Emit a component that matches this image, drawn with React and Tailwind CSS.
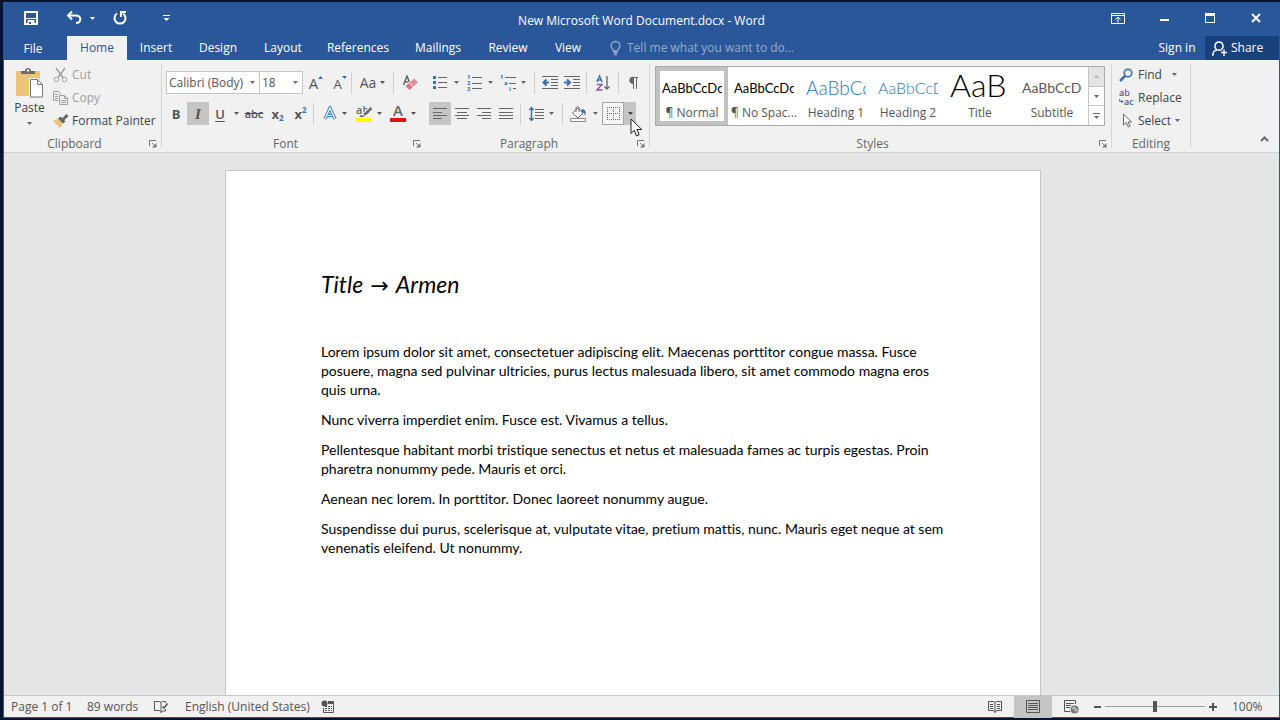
import { useState } from 'react';
import clsx from 'clsx';

const TABS = [
  { name: 'Home', width: 'w-[60px]' },
  { name: 'Insert', width: 'w-[58px]' },
  { name: 'Design', width: 'w-[66px]' },
  { name: 'Layout', width: 'w-[64px]' },
  { name: 'References', width: 'w-[86px]' },
  { name: 'Mailings', width: 'w-[74px]' },
  { name: 'Review', width: 'w-[66px]' },
  { name: 'View', width: 'w-[54px]' },
];

const STYLES = [
  { name: '¶ Normal', sample: 'AaBbCcDc', look: 'text-[13px] text-black' },
  { name: '¶ No Spac...', sample: 'AaBbCcDc', look: 'text-[13px] text-black' },
  { name: 'Heading 1', sample: 'AaBbCc', look: 'text-[19px] font-light text-[#2e74b5]' },
  { name: 'Heading 2', sample: 'AaBbCcD', look: 'text-[16px] font-light text-[#2e74b5]' },
  { name: 'Title', sample: 'AaB', look: 'pb-[6px] text-[32px] font-light text-black' },
  { name: 'Subtitle', sample: 'AaBbCcD', look: 'text-[14px] text-[#5a5a5a]' },
];

const PARAGRAPHS = [
  'Lorem ipsum dolor sit amet, consectetuer adipiscing elit. Maecenas porttitor congue massa. Fusce posuere, magna sed pulvinar ultricies, purus lectus malesuada libero, sit amet commodo magna eros quis urna.',
  'Nunc viverra imperdiet enim. Fusce est. Vivamus a tellus.',
  'Pellentesque habitant morbi tristique senectus et netus et malesuada fames ac turpis egestas. Proin pharetra nonummy pede. Mauris et orci.',
  'Aenean nec lorem. In porttitor. Donec laoreet nonummy augue.',
  'Suspendisse dui purus, scelerisque at, vulputate vitae, pretium mattis, nunc. Mauris eget neque at sem venenatis eleifend. Ut nonummy.',
];

function Arrow({ className }) {
  return (
    <svg width="5" height="3" viewBox="0 0 5 3" className={clsx('shrink-0', className)} fill="currentColor" aria-hidden="true">
      <path d="M0 0h5L2.5 3z" />
    </svg>
  );
}

function Icon({ w = 16, h = 16, children, className }) {
  return (
    <svg
      width={w}
      height={h}
      viewBox={`0 0 ${w} ${h}`}
      className={clsx('shrink-0 overflow-visible', className)}
      fill="none"
      stroke="currentColor"
      aria-hidden="true"
    >
      {children}
    </svg>
  );
}

function Tool({ label, className, children, ...rest }) {
  return (
    <button
      type="button"
      aria-label={label}
      className={clsx('flex h-[23px] shrink-0 items-center justify-center', className)}
      {...rest}
    >
      {children}
    </button>
  );
}

function Divider() {
  return <span className="h-[22px] w-px shrink-0 bg-[#d0d0d0]" />;
}

function Launcher({ label }) {
  return (
    <button type="button" aria-label={label} className="flex h-[17px] w-4 items-center justify-center text-[#777]">
      <Icon w={8} h={8}>
        <path d="M.5 6V.5H7M3 3l3 3" />
        <path d="M7.5 3v4.5H3z" fill="currentColor" stroke="none" />
      </Icon>
    </button>
  );
}

function Group({ title, width, launcher, children }) {
  return (
    <section aria-label={title} className={clsx('flex shrink-0', width)}>
      <div className="flex flex-1 flex-col justify-between">
        <div>{children}</div>
        <div className="flex h-[17px] items-center text-[#666]">
          <span className="flex-1 text-center">{title}</span>
          {launcher && <Launcher label={`${title} settings`} />}
        </div>
      </div>
      <span className="my-1 w-px bg-[#d4d4d4]" />
    </section>
  );
}

/* title bar */

function TitleBar() {
  return (
    <header className="flex h-[34px] items-center bg-[#2a579a] pb-[2px] text-white">
      <div className="flex flex-1 items-center">
        <Tool label="Save" className="ml-[15px] w-6">
          <Icon w={14} h={14}>
            <path d="M1 1h12v12H1z" strokeWidth="2" />
            <path d="M2 7.5h10" />
            <path d="M3.5 9h7v5h-7z" fill="currentColor" stroke="none" />
            <path d="M5 11h2v2H5z" fill="#2a579a" stroke="none" />
          </Icon>
        </Tool>
        <Tool label="Undo" className="ml-[19px] w-6">
          <Icon w={16} h={14}>
            <path d="M1.5 4.5H10c6 0 5.5 7.5 0 7.5M6 .5l-4 4 4 4" strokeWidth="2" />
          </Icon>
        </Tool>
        <Tool label="Undo list" className="w-3">
          <Arrow />
        </Tool>
        <Tool label="Repeat" className="ml-[10px] w-6">
          <Icon w={14} h={14}>
            <path d="M4 2.500a5.500 5.500 0 1 0 6 0" strokeWidth="2" />
            <path d="M8 6V1h5" strokeWidth="2" />
          </Icon>
        </Tool>
        <Tool label="Customize toolbar" className="ml-6 w-5">
          <Icon w={7} h={6}>
            <path d="M0 .5h7" />
            <path d="M.5 3h6l-3 3z" fill="currentColor" stroke="none" />
          </Icon>
        </Tool>
      </div>
      <h1 className="pt-[5px]">New Microsoft Word Document.docx - Word</h1>
      <div className="flex flex-1 justify-end">
        <Tool label="Ribbon display options" className="w-[46px]">
          <Icon w={14} h={11}>
            <path d="M.5.5h13v10H.5zM.5 2.5h13M7 9.5V5M4.5 6.500L7 4l2.500 2.500" />
          </Icon>
        </Tool>
        <Tool label="Minimize" className="w-[46px]">
          <span className="mt-1 h-[2px] w-[9px] bg-white" />
        </Tool>
        <Tool label="Maximize" className="w-[46px]">
          <span className="h-[10px] w-[10px] border border-t-[3px] border-white" />
        </Tool>
        <Tool label="Close" className="w-[46px]">
          <Icon w={10} h={10}>
            <path d="M1 1l8 8M9 1L1 9" strokeWidth="2" />
          </Icon>
        </Tool>
      </div>
    </header>
  );
}

function TabBar({ active, onSelect }) {
  return (
    <nav className="flex h-6 bg-[#2a579a] text-white">
      <button type="button" className="mr-[5px] w-[58px] pt-px">
        File
      </button>
      {TABS.map((tab) => (
        <button
          key={tab.name}
          type="button"
          onClick={() => onSelect(tab.name)}
          className={clsx(tab.width, tab.name === active && 'bg-[#f1f1f1] text-[#2a579a]')}
        >
          {tab.name}
        </button>
      ))}
      <label className="ml-[15px] flex flex-1 items-center gap-[6px] text-[#94abcd]">
        <Icon w={11} h={14}>
          <path d="M3.5 10C3.5 8 1 7.5 1 5a4.500 4.500 0 0 1 9 0c0 2.500-2.500 3-2.500 5zM3.500 11.500h4M4 13.500h3" strokeWidth="1.3" />
        </Icon>
        <input
          aria-label="Tell me what you want to do"
          placeholder="Tell me what you want to do..."
          className="w-[200px] bg-transparent outline-none placeholder:text-[#94abcd]"
        />
      </label>
      <button type="button" className="w-[56px]">
        Sign in
      </button>
      <button type="button" className="flex w-[74px] items-center gap-1 bg-[#18407a] pl-[7px]">
        <Icon w={15} h={15}>
          <path d="M.8 15c0-4 2-6 4.500-6M4.500 8.500C1.500 6 3 1 7 1s5.500 5 2.500 7.500c-1 .8-3 .8-4 .2M12 8.500v6.500M9 11.500h6" strokeWidth="1.400" />
        </Icon>
        Share
      </button>
    </nav>
  );
}

/* ribbon groups */

function ClipboardGroup() {
  return (
    <Group title="Clipboard" width="w-[158px]" launcher>
      <div className="flex pt-[3px]">
        <button type="button" className="flex w-[49px] flex-col items-center pt-1 pl-[2px]">
          <svg width="29" height="31" viewBox="0 0 29 31" aria-hidden="true">
            <path d="M1 4h24v25H1z" fill="#eac47b" />
            <path d="M6 7V4h4a3 3 0 0 1 6 0h4v3z" fill="#6b6b6b" />
            <circle cx="13" cy="3.500" r="1.200" fill="#f1f1f1" />
            <path d="M14 11h9l6 6v14H14z" fill="#f1f1f1" />
            <path d="M15.500 12.500h7l5 5v12.500h-12z" fill="#fff" stroke="#777" />
            <path d="M22.500 12.500v5h5" fill="none" stroke="#777" />
          </svg>
          <span className="mt-[2px] leading-4">Paste</span>
          <Arrow className="mt-[6px] text-[#666]" />
        </button>
        <div>
          <button type="button" className="flex h-[23px] items-center gap-1 text-[#a0a0a0]">
            <Icon w={15} h={16}>
              <path d="M3 1l7 9.500M12 1L5 10.500" strokeWidth="1.500" />
              <circle cx="3.500" cy="12.500" r="2.300" />
              <circle cx="11.500" cy="12.500" r="2.300" />
            </Icon>
            Cut
          </button>
          <button type="button" className="flex h-[23px] items-center gap-1 text-[#a0a0a0]">
            <Icon w={15} h={14}>
              <path d="M5.500 9.500h-5V.5h5l2 2v1M2 3.500h3M2 5.500h3M2 7.500h3" />
              <path d="M6.500 4.500h5l3 3v6h-8zM11.500 4.500v3h3M8 9.500h5M8 11.500h5" />
            </Icon>
            Copy
          </button>
          <button type="button" className="flex h-[23px] items-center gap-1">
            <Icon w={16} h={14} className="-mr-px">
              <path d="M0 7l5-2.500 5 5L7 14z" fill="#eac47b" stroke="none" />
              <path d="M5 4.500l2.500-2 5 5-2.500 2z" fill="#666" stroke="none" />
              <path d="M10 5.500L14.500 1" stroke="#666" strokeWidth="3" />
            </Icon>
            Format Painter
          </button>
        </div>
      </div>
    </Group>
  );
}

function Combo({ label, width, options }) {
  return (
    <label className={clsx('relative flex h-[23px] shrink-0 items-center border border-[#c6c6c6] bg-white', width)}>
      <select aria-label={label} className="h-[21px] w-full appearance-none bg-transparent pl-[2px] leading-5 text-[#555] outline-none">
        {options.map((option) => (
          <option key={option}>{option}</option>
        ))}
      </select>
      <Arrow className="pointer-events-none absolute right-1 text-[#666]" />
    </label>
  );
}

function FontGroup() {
  const [italic, setItalic] = useState(true);

  return (
    <Group title="Font" width="w-[263px]" launcher>
      <div className="flex flex-col gap-2 pt-[11px] pl-1 text-[#555]">
        <div className="flex items-center">
          <Combo label="Font" width="w-[94px]" options={['Calibri (Body)', 'Calibri Light']} />
          <Combo label="Font size" width="w-[44px] -ml-px" options={['18', '11', '12', '14']} />
          <Tool label="Increase font size" className="w-[26px]">
            <span className="text-[15px]">A</span>
            <svg width="5" height="3" viewBox="0 0 5 3" className="mb-[10px]" aria-hidden="true">
              <path d="M0 3h5L2.500 0z" fill="#3b6fa8" />
            </svg>
          </Tool>
          <Tool label="Decrease font size" className="w-[22px]">
            <span className="pt-[2px] text-[13px]">A</span>
            <Arrow className="mb-[10px] text-[#3b6fa8]" />
          </Tool>
          <Divider />
          <Tool label="Change case" className="w-[41px] gap-1">
            <span className="text-[14px]">Aa</span>
            <Arrow />
          </Tool>
          <Divider />
          <Tool label="Clear formatting" className="w-[31px]">
            <svg width="16" height="16" viewBox="0 0 16 16" aria-hidden="true">
              <path d="M1.500 10L5 1l3.500 9M3 7h4.500" fill="none" stroke="#666" strokeWidth="1.500" />
              <path d="M2.500 10.500L7 6.500l5.500 5L8 15.500z" fill="#f1f1f1" />
              <path d="M3.500 11l3.500-3 4 4-3.500 3z" fill="#d9788f" />
              <path d="M7.500 7.500L12.500 3.500l3.500 4-4.500 4z" fill="#e68a9c" />
            </svg>
          </Tool>
        </div>
        <div className="flex items-center">
          <Tool label="Bold" className="-ml-px w-[22px] text-[13px] font-bold">
            B
          </Tool>
          <Tool
            label="Italic"
            aria-pressed={italic}
            onClick={() => setItalic(!italic)}
            className={clsx('w-[22px] font-["Liberation_Serif",serif] text-[15px] font-bold italic', italic && 'bg-[#c5c5c5]')}
          >
            I
          </Tool>
          <Tool label="Underline" className="w-[22px] text-[13px] font-semibold underline underline-offset-2">
            U
          </Tool>
          <Tool label="Underline style" className="w-[11px]">
            <Arrow />
          </Tool>
          <Tool label="Strikethrough" className="w-6 text-[11px] font-semibold line-through">
            abc
          </Tool>
          <Tool label="Subscript" className="w-[23px] text-[13px] font-bold">
            x<span className="pt-2 text-[8px] text-[#3b6fa8]">2</span>
          </Tool>
          <Tool label="Superscript" className="w-[23px] text-[13px] font-bold">
            x<span className="pb-2 text-[8px] text-[#3b6fa8]">2</span>
          </Tool>
          <span className="w-px" />
          <Divider />
          <Tool label="Text effects" className="w-[37px] gap-[5px] pl-1">
            <svg width="14" height="15" viewBox="0 0 14 15" aria-hidden="true">
              <path d="M2 13L7 2l5 11M4.500 9.500h5" fill="none" stroke="#b9d3ee" strokeWidth="4" />
              <path d="M2 13L7 2l5 11M4.500 9.500h5" fill="none" stroke="#3f7dbd" strokeWidth="3" />
              <path d="M2 13L7 2l5 11M4.500 9.500h5" fill="none" stroke="#fff" strokeWidth="1.200" />
            </svg>
            <Arrow />
          </Tool>
          <Tool label="Highlight colour" className="w-[35px] gap-[5px]">
            <svg width="16" height="17" viewBox="0 0 16 17" className="overflow-visible" aria-hidden="true">
              <text x="0" y="9" fontSize="11" fontWeight="600" fill="#666">ab</text>
              <path d="M15 2L9 8l-4 4" stroke="#f1f1f1" strokeWidth="3" fill="none" />
              <path d="M15.500 3L8 10" stroke="#6b6b6b" strokeWidth="2.500" fill="none" />
              <path d="M5 9.500l4 2.500H3.500z" fill="#6b6b6b" />
              <path d="M0 13h16v4H0z" fill="#ffff00" />
            </svg>
            <Arrow />
          </Tool>
          <Tool label="Font colour" className="w-[34px] gap-[5px]">
            <svg width="16" height="17" viewBox="0 0 16 17" className="overflow-visible" aria-hidden="true">
              <text x="3" y="11" fontSize="15" fontWeight="600" fill="#666">A</text>
              <path d="M0 13h16v4H0z" fill="#e01010" />
            </svg>
            <Arrow />
          </Tool>
        </div>
      </div>
    </Group>
  );
}

function AlignIcon({ d }) {
  return (
    <Icon w={14} h={12} className="text-[#666]">
      <path d={d} />
    </Icon>
  );
}

function ParagraphGroup() {
  return (
    <Group title="Paragraph" width="w-[225px]" launcher>
      <div className="flex flex-col gap-2 pt-[11px] pl-1 text-[#666]">
        <div className="flex items-center">
          <Tool label="Bullets" className="w-[34px] gap-[7px]">
            <Icon w={14} h={15}>
              <path d="M5 2.500h9M5 7.500h9M5 12.500h9" />
              <path d="M0 1h3v3H0zM0 6h3v3H0zM0 11h3v3H0z" fill="#3b6fa8" stroke="none" />
            </Icon>
            <Arrow />
          </Tool>
          <Tool label="Numbering" className="w-[33px] gap-[6px]">
            <Icon w={15} h={16}>
              <path d="M5 2.500h10M5 8.500h10M5 13.500h10" />
              <g fill="#3b6fa8" stroke="none" fontSize="6" fontWeight="700">
                <text x="0" y="4">1</text>
                <text x="0" y="10">2</text>
                <text x="0" y="16">3</text>
              </g>
            </Icon>
            <Arrow />
          </Tool>
          <Tool label="Multilevel list" className="w-[34px] gap-[4px]">
            <Icon w={17} h={16}>
              <path d="M5 2.500h11M9 8.500h7M13 13.500h3" />
              <g fill="#3b6fa8" stroke="none" fontSize="6" fontWeight="700">
                <text x="0" y="4">1</text>
                <text x="4" y="10">a</text>
                <text x="9" y="16">i</text>
              </g>
            </Icon>
            <Arrow />
          </Tool>
          <span className="w-1" />
          <Divider />
          <Tool label="Decrease indent" className="ml-1 w-[22px]">
            <Icon w={16} h={14}>
              <path d="M0 .5h16M9 3.500h7M9 6.500h7M9 9.500h7M0 12.500h16" />
              <path d="M7 6.500H2M4.500 3.500l-3 3 3 3" stroke="#3b6fa8" strokeWidth="2" />
            </Icon>
          </Tool>
          <Tool label="Increase indent" className="w-[22px]">
            <Icon w={16} h={14}>
              <path d="M0 .5h16M9 3.500h7M9 6.500h7M9 9.500h7M0 12.500h16" />
              <path d="M0 6.500h5M3 3.500l3 3-3 3" stroke="#3b6fa8" strokeWidth="2" />
            </Icon>
          </Tool>
          <span className="w-[3px]" />
          <Divider />
          <Tool label="Sort" className="w-[31px] pl-px">
            <Icon w={14} h={16}>
              <path d="M.8 7L3.500 1 6.200 7M1.800 5h3.500" stroke="#3b6fa8" strokeWidth="1.400" />
              <path d="M1 9.500h5L1 15h5.500" stroke="#9151a8" strokeWidth="1.400" />
              <path d="M11 1v13M8.500 11.500L11 14l2.500-2.500" strokeWidth="1.300" />
            </Icon>
          </Tool>
          <Divider />
          <Tool label="Show formatting marks" className="w-[27px]">
            <Icon w={10} h={13}>
              <path d="M5 1.500h5M5.500 1v12M8.500 1v12" />
              <path d="M5 1a3.200 3.200 0 0 0 0 6.500z" fill="currentColor" />
            </Icon>
          </Tool>
        </div>
        <div className="flex items-center">
          <Tool label="Align left" className="w-[22px] bg-[#c5c5c5]">
            <AlignIcon d="M0 .5h14M0 4.500h9M0 7.500h14M0 10.500h9" />
          </Tool>
          <Tool label="Center" className="w-[22px]">
            <AlignIcon d="M0 .5h14M2 4.500h10M0 7.500h14M2 10.500h10" />
          </Tool>
          <Tool label="Align right" className="w-[22px]">
            <AlignIcon d="M0 .5h14M5 4.500h9M0 7.500h14M5 10.500h9" />
          </Tool>
          <Tool label="Justify" className="w-[22px]">
            <AlignIcon d="M0 .5h14M0 4.500h14M0 7.500h14M0 10.500h14" />
          </Tool>
          <span className="w-[3px]" />
          <Divider />
          <Tool label="Line spacing" className="w-[41px] gap-[5px]">
            <Icon w={15} h={16}>
              <path d="M6 3.500h9M6 6.500h9M6 9.500h9M6 12.500h9" />
              <path d="M2.500 1.500v13M.3 4l2.200-2.500L4.700 4M.3 12l2.200 2.500L4.700 12" stroke="#3b6fa8" strokeWidth="1.400" />
            </Icon>
            <Arrow />
          </Tool>
          <Divider />
          <Tool label="Shading" className="w-[39px] gap-[5px] pl-[3px]">
            <Icon w={18} h={16}>
              <path d="M2.500 7L8 2l5 5-5 5z" fill="#fff" />
              <path d="M6 6V2.500C6 0 9 0 9 2.500V6" />
              <path d="M11.500 3c4 0 5 3 3.500 7-.5-3-1.500-4-3.500-4z" fill="#3b6fa8" stroke="none" />
              <path d="M.5 12.500h15v3H.5z" fill="#fff" stroke="#888" />
            </Icon>
            <Arrow />
          </Tool>
          <Tool label="Borders" className="w-[22px] border border-[#a6a6a6] bg-[#f6f6f6]">
            <Icon w={13} h={13}>
              <path d="M0 .5h13M0 6.500h13M0 12.500h13M.5 0v13M6.500 0v13M12.500 0v13" strokeDasharray="1 1" />
            </Icon>
          </Tool>
          <Tool label="Border options" className="relative w-3 bg-[#c5c5c5] text-[#444]">
            <Arrow />
            <svg width="13" height="20" viewBox="0 0 13 20" className="absolute top-4 left-[6px] z-10" aria-hidden="true">
              <path d="M1 1v14.500l3.300-3.200L6.500 18l2.700-1.200L7 11.500h4.800z" fill="#fff" stroke="#222" />
            </svg>
          </Tool>
        </div>
      </div>
    </Group>
  );
}

function StylesGroup() {
  const [current, setCurrent] = useState('¶ Normal');

  return (
    <Group title="Styles" width="w-[462px]" launcher>
      <div className="mt-[6px] ml-[5px] flex h-[60px] w-[450px] border border-[#ababab] bg-white">
        {STYLES.map((style) => (
          <button
            key={style.name}
            type="button"
            onClick={() => setCurrent(style.name)}
            className={clsx(
              'flex w-[72px] shrink-0 flex-col items-center border-4',
              style.name === current ? 'border-[#c1c1c1]' : 'border-transparent'
            )}
          >
            <span className="flex h-[34px] w-[60px] items-center overflow-hidden">
              <span className={clsx('font-[Lato,sans-serif] leading-8 whitespace-nowrap', style.look)}>{style.sample}</span>
            </span>
            <span className="leading-4 whitespace-nowrap text-[#555]">{style.name}</span>
          </button>
        ))}
        <div className="flex flex-1 flex-col border-l border-[#c6c6c6] text-[#666]">
          <Tool label="Previous styles" className="flex-1 bg-[#e3e3e3] text-[#b5b5b5]">
            <Arrow className="rotate-180" />
          </Tool>
          <Tool label="Next styles" className="flex-1 border-y border-[#c6c6c6]">
            <Arrow />
          </Tool>
          <Tool label="More styles" className="flex-1">
            <Icon w={7} h={6}>
              <path d="M0 .5h7" />
              <path d="M1 3h5L3.500 6z" fill="currentColor" stroke="none" />
            </Icon>
          </Tool>
        </div>
      </div>
    </Group>
  );
}

function EditingGroup() {
  return (
    <Group title="Editing" width="w-[79px]">
      <div className="pt-[3px] pl-[7px]">
        <button type="button" className="flex h-[23px] items-center gap-1">
          <Icon w={15} h={14}>
            <circle cx="9" cy="5" r="3.800" stroke="#3b6fa8" strokeWidth="1.600" />
            <path d="M6 8l-5 5" stroke="#3b6fa8" strokeWidth="2.500" />
          </Icon>
          Find
          <Arrow className="ml-[6px] text-[#666]" />
        </button>
        <button type="button" className="flex h-[23px] items-center gap-1">
          <svg width="16" height="16" viewBox="0 0 16 16" className="-mr-px overflow-visible" aria-hidden="true">
            <g fontSize="9" fontWeight="600">
              <text x="0" y="6" fill="#555">a<tspan fill="#8a4fa5">b</tspan></text>
              <text x="5" y="15" fill="#555">a<tspan fill="#3b6fa8">c</tspan></text>
            </g>
            <path d="M.7 9v2.500h3M2.500 10l1.500 1.500L2.500 13" fill="none" stroke="#3b6fa8" />
          </svg>
          Replace
        </button>
        <button type="button" className="flex h-[23px] items-center gap-1">
          <Icon w={15} h={15} className="text-[#666]">
            <path d="M4.500 1v11l2.800-2.500 2 4.500 1.700-.8-2-4.200h3.500z" fill="#fff" />
          </Icon>
          Select
          <Arrow className="text-[#666]" />
        </button>
      </div>
    </Group>
  );
}

/* status bar */

function StatusBar() {
  const [zoom, setZoom] = useState(100);

  return (
    <footer className="flex h-[22px] shrink-0 items-center border-t border-[#c6c6c6] bg-[#f1f1f1] text-[#555]">
      <button type="button" className="ml-[7px] w-[76px] text-left">Page 1 of 1</button>
      <button type="button" className="w-[66px] text-left">89 words</button>
      <Tool label="Proofing" className="w-4">
        <Icon w={15} h={14}>
          <path d="M7 2.500v10M7 2.500L5.500 1.500h-5v9h5L7 12.500l1.500-1.500h3V9M7 2.500l1.500-1h3V3" />
          <path d="M8.500 6.500L10 8l3.500-4.500" strokeWidth="1.500" />
        </Icon>
      </Tool>
      <button type="button" className="ml-4 w-[135px] text-left">English (United States)</button>
      <Tool label="Macro recording" className="w-4">
        <Icon w={14} h={14}>
          <path d="M7 2h6v2H7z" fill="currentColor" stroke="none" />
          <path d="M7 1.500h5.500v11h-10V8" />
          <path d="M4 6.500h7M4 8.500h7M4 10.500h7" strokeDasharray="2 1" />
          <circle cx="3.500" cy="3.500" r="3" fill="currentColor" stroke="none" />
        </Icon>
      </Tool>
      <div className="flex-1" />
      <Tool label="Read mode" className="w-[38px]">
        <Icon w={14} h={13}>
          <path d="M7 2.500v10M7 2.500L5.500 1.500h-5v9h5L7 12.500l1.500-2h5v-9h-5zM2 4.500h3M2 6.500h3M2 8.500h3M9 4.500h3M9 6.500h3M9 8.500h3" />
        </Icon>
      </Tool>
      <Tool label="Print layout" className="h-[21px] w-[38px] bg-[#c5c5c5]">
        <Icon w={14} h={13}>
          <path d="M.5.5h13v12H.5zM2 3.500h10M2 5.500h10M2 7.500h10M2 9.500h10" />
        </Icon>
      </Tool>
      <Tool label="Web layout" className="w-[38px]">
        <Icon w={15} h={14}>
          <path d="M6 11.500H.5V.5h11V4M2 3.500h8M2 5.500h5M2 7.500h4" />
          <circle cx="10.500" cy="9.500" r="4" fill="#777" stroke="none" />
          <path d="M8 9.500l2-2.500 1.500 2-1 2M12 11.500l1-2" stroke="#eee" />
        </Icon>
      </Tool>
      <Tool label="Zoom out" className="w-[15px]" onClick={() => setZoom(Math.max(10, zoom - 10))}>
        <span className="h-[2px] w-[7px] bg-[#555]" />
      </Tool>
      <input
        type="range"
        aria-label="Zoom"
        min="10"
        max="190"
        value={zoom}
        onChange={(e) => setZoom(Number(e.target.value))}
        className="h-3 w-[100px] appearance-none bg-transparent [&::-webkit-slider-runnable-track]:h-px [&::-webkit-slider-runnable-track]:bg-[#a0a0a0] [&::-webkit-slider-thumb]:-mt-[5px] [&::-webkit-slider-thumb]:h-[11px] [&::-webkit-slider-thumb]:w-1 [&::-webkit-slider-thumb]:appearance-none [&::-webkit-slider-thumb]:bg-[#555]"
      />
      <Tool label="Zoom in" className="w-4" onClick={() => setZoom(Math.min(190, zoom + 10))}>
        <Icon w={8} h={8}>
          <path d="M0 4h8M4 0v8" strokeWidth="2" />
        </Icon>
      </Tool>
      <button type="button" className="w-[58px] pl-[11px] text-left">{zoom}%</button>
    </footer>
  );
}

export default function App() {
  const [tab, setTab] = useState('Home');

  return (
    <div className='flex h-screen flex-col bg-[#04132e] pt-[2px] pb-[2px] pl-[3px] font-["Open_Sans",sans-serif] text-[12px] leading-4 text-[#444]'>
      <div className="flex min-h-0 flex-1 flex-col border-x border-b border-[#2a579a] bg-[#e6e6e6]">
        <TitleBar />
        <TabBar active={tab} onSelect={setTab} />

        <div className="flex h-[93px] shrink-0 border-b border-[#d0d0d0] bg-[#f1f1f1]">
          <ClipboardGroup />
          <FontGroup />
          <ParagraphGroup />
          <StylesGroup />
          <EditingGroup />
          <div className="flex flex-1 items-end justify-end pr-[7px] pb-[2px]">
            <Tool label="Collapse the ribbon" className="h-3 w-4">
              <Icon w={9} h={6} className="text-[#666]">
                <path d="M1 5l3.500-3.500L8 5" strokeWidth="2" />
              </Icon>
            </Tool>
          </div>
        </div>

        <main className="flex min-h-0 flex-1 justify-center overflow-hidden pt-[17px] pr-[17px]">
          <article className="h-[1056px] w-[816px] shrink-0 border border-[#c6c6c6] bg-white px-[95px] pt-[95px] font-[Lato,sans-serif] text-black [font-variant-ligatures:none]">
            <h2 className="mb-10 text-[23px] leading-9 italic">
              Title <span className="mx-[2px] font-['DejaVu_Sans',sans-serif] text-[22px] leading-none not-italic">→</span> Armen
            </h2>
            {PARAGRAPHS.map((text) => (
              <p key={text} className="mb-[11px] text-[14px] leading-[19px]">
                {text}
              </p>
            ))}
          </article>
        </main>

        <StatusBar />
      </div>
    </div>
  );
}
